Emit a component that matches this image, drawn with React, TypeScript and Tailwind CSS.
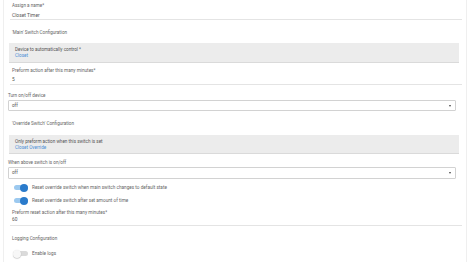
import React from "react";

const Toggle = ({ on }: { on: boolean }) => (
  <div className="relative w-[16px] h-[9px] ml-[9px] shrink-0">
    <div
      className={
        "absolute left-[1px] top-[2px] w-[14px] h-[5px] rounded-full " +
        (on ? "bg-[#9cc9ef]" : "bg-[#dadada]")
      }
    />
    <div
      className={
        "absolute top-[0.5px] w-[8px] h-[8px] rounded-full " +
        (on
          ? "left-[7px] bg-[#2a7bcb]"
          : "left-[0px] bg-[#f7f7f7] shadow-[0_0.5px_1px_rgba(0,0,0,0.3)]")
      }
    />
  </div>
);

const Select = ({ h }: { h: string }) => (
  <div
    className={
      "ml-[4px] w-[448px] border border-[#d2d2d2] rounded-[1px] flex items-center justify-between pl-[3px] pr-[4px] text-[4.6px] text-[#555] " +
      h
    }
  >
    <span>off</span>
    <span className="w-0 h-0 border-l-[1.5px] border-r-[1.5px] border-t-[2px] border-l-transparent border-r-transparent border-t-[#444]" />
  </div>
);

export default function App() {
  return (
    <div
      className="w-[474px] h-[262px] bg-white overflow-hidden"
      style={{ fontFamily: "Roboto, 'Liberation Sans', sans-serif" }}
    >
      <div className="ml-[3px] w-[464px] h-[262px] border-x border-[#efefef] flex flex-col leading-[6px]">
        {/* Field 1 */}
        <div className="ml-[6px] w-[452px] pt-[3px] pl-[2px] border-b border-[#e4e4e4] h-[20px]">
          <div className="h-[6px] text-[4.6px] text-[#666]">Assign a name*</div>
          <div className="h-[6px] mt-[2.5px] text-[4.9px] text-[#555]">Closet Timer</div>
        </div>

        <div className="mt-[10px] h-[6px] ml-[8px] text-[4.6px] text-[#666]">
          'Main' Switch Configuration
        </div>

        <div className="mt-[7px] ml-[5px] w-[450px] h-[20px] bg-[#ececec] border-b border-[#dadada] pt-[4px] pl-[6px]">
          <div className="h-[6px] text-[4.6px] text-[#555]">Device to automatically control *</div>
          <div className="h-[6px] text-[4.6px] text-[#4a8fd6]">Closet</div>
        </div>

        <div className="ml-[6px] w-[452px] pl-[2px] border-b border-[#e4e4e4] mt-[5px] h-[17px]">
          <div className="h-[6px] text-[4.7px] text-[#666]">Preform action after this many minutes*</div>
          <div className="h-[6px] mt-[3px] text-[4.8px] text-[#555]">5</div>
        </div>

        <div className="mt-[8px] h-[6px] ml-[4px] text-[4.6px] text-[#666]">Turn on/off device</div>
        <div className="mt-[1px]">
          <Select h="h-[11px]" />
        </div>

        <div className="mt-[10px] h-[6px] ml-[8px] text-[4.6px] text-[#666]">
          'Override Switch' Configuration
        </div>

        <div className="mt-[8px] ml-[5px] w-[450px] h-[19px] bg-[#ececec] border-b border-[#dadada] pt-[4px] pl-[6px]">
          <div className="h-[6px] text-[4.6px] text-[#555]">Only preform action when this switch is set</div>
          <div className="h-[6px] text-[4.6px] text-[#4a8fd6]">Closet Override</div>
        </div>

        <div className="mt-[6px] h-[6px] ml-[4px] text-[4.6px] text-[#666]">When above switch is on/off</div>
        <div className="mt-[1px]">
          <Select h="h-[12px]" />
        </div>

        <div className="mt-[4px] h-[9px] flex items-center">
          <Toggle on />
          <span className="ml-[3px] text-[4.7px] text-[#666]">
            Reset override switch when main switch changes to default state
          </span>
        </div>
        <div className="mt-[4px] h-[9px] flex items-center">
          <Toggle on />
          <span className="ml-[3px] text-[4.7px] text-[#666]">
            Reset override switch after set amount of time
          </span>
        </div>

        <div className="ml-[6px] w-[452px] pl-[2px] border-b border-[#e4e4e4] mt-[5px] h-[16px]">
          <div className="h-[6px] text-[4.7px] text-[#666]">Preform reset action after this many minutes*</div>
          <div className="h-[6px] mt-[1px] text-[4.8px] text-[#555]">60</div>
        </div>

        <div className="mt-[10px] h-[6px] ml-[8px] text-[4.6px] text-[#666]">Logging Configuration</div>

        <div className="mt-[7px] h-[9px] flex items-center">
          <Toggle on={false} />
          <span className="ml-[3px] text-[4.7px] text-[#666]">Enable logs</span>
        </div>
      </div>
    </div>
  );
}
